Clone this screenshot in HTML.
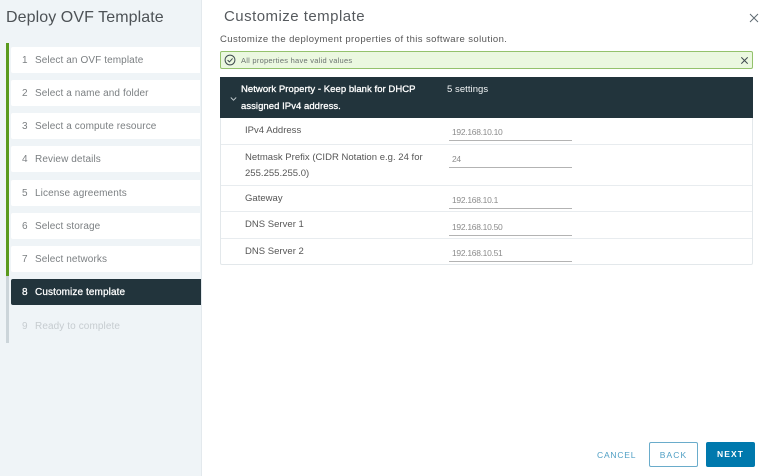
<!DOCTYPE html>
<html><head><meta charset="utf-8"><style>
html,body{margin:0;padding:0;width:768px;height:476px;overflow:hidden;background:#fff;font-family:"Liberation Sans",sans-serif}
div,span{position:absolute;white-space:nowrap;box-sizing:border-box}
.side{left:0;top:0;width:202px;height:476px;background:#eff4f7;border-right:1px solid #e3e9ed}
.item{left:11px;width:189px;height:26px;background:#fff;border-radius:2px 0 0 2px;font-size:10px;line-height:27px;color:#7b7f82;letter-spacing:.1px}
.item b{position:absolute;left:11px;font-weight:normal}
.item i{position:absolute;left:24px;font-style:normal}
.lab{left:245px;font-size:9.5px;line-height:15px;color:#565656;letter-spacing:.02px}
.val{left:449px;width:123px;height:16px;border-bottom:1px solid #b3b3b3;font-size:8.5px;line-height:14px;padding-left:3px;color:#8c8c8c;letter-spacing:-.3px}
.sep{left:221px;width:531px;height:1px;background:#e8ecef}
</style></head><body>
<div class="side"></div>
<div style="left:6px;top:8px;font-size:16px;line-height:20px;color:#4d5256;letter-spacing:.08px">Deploy OVF Template</div>
<div style="left:6px;top:43px;width:3px;height:233px;background:#5a9a1e"></div>
<div style="left:6px;top:276px;width:3px;height:67px;background:#ccd5da"></div>
<div class="item" style="top:47px"><b>1</b><i>Select an OVF template</i></div>
<div class="item" style="top:80px"><b>2</b><i>Select a name and folder</i></div>
<div class="item" style="top:113px"><b>3</b><i>Select a compute resource</i></div>
<div class="item" style="top:146px"><b>4</b><i>Review details</i></div>
<div class="item" style="top:180px"><b>5</b><i>License agreements</i></div>
<div class="item" style="top:213px"><b>6</b><i>Select storage</i></div>
<div class="item" style="top:246px"><b>7</b><i>Select networks</i></div>
<div class="item" style="top:279px;width:190px;background:#22343c;color:#fff"><b style="-webkit-text-stroke:.25px #fff">8</b><i style="-webkit-text-stroke:.25px #fff">Customize template</i></div>
<div class="item" style="top:313px;background:transparent;color:#c6ccd0"><b>9</b><i>Ready to complete</i></div>

<div style="left:224px;top:7px;font-size:15px;line-height:20px;color:#565a5e;letter-spacing:.47px">Customize template</div>
<svg style="position:absolute;left:749px;top:13px" width="10" height="10" viewBox="0 0 10 10"><path d="M1 1L9 9M9 1L1 9" stroke="#5f6b72" stroke-width="1" fill="none"/></svg>
<div style="left:220px;top:33px;font-size:9.5px;line-height:14px;color:#565656;letter-spacing:.41px">Customize the deployment properties of this software solution.</div>

<div style="left:220px;top:51px;width:533px;height:18px;background:#ebf8e0;border:1px solid #94c26c;border-radius:2px"></div>
<svg style="position:absolute;left:224px;top:54px" width="12" height="12" viewBox="0 0 12 12"><circle cx="6" cy="6" r="4.9" fill="none" stroke="#3f4a4f" stroke-width="1"/><path d="M3.6 6.1L5.4 7.9L8.6 4.4" fill="none" stroke="#3f4a4f" stroke-width="1"/></svg>
<div style="left:241px;top:55px;font-size:7.5px;line-height:12px;color:#6a736f;letter-spacing:.25px">All properties have valid values</div>
<svg style="position:absolute;left:741px;top:57px" width="7" height="7" viewBox="0 0 7 7"><path d="M.3 .3L6.7 6.7M6.7 .3L.3 6.7" stroke="#3f4a4f" stroke-width="1" fill="none"/></svg>

<div style="left:220px;top:77px;width:533px;height:188px;border:1px solid #e3e8eb;border-radius:0 0 2px 2px"></div>
<div style="left:220px;top:77px;width:533px;height:41px;background:#22343c"></div>
<svg style="position:absolute;left:230px;top:96px" width="7" height="6" viewBox="0 0 7 6"><path d="M.8 1.5L3.5 4.2L6.2 1.5" fill="none" stroke="#c5ced2" stroke-width=".9"/></svg>
<div style="left:241px;top:81px;font-size:9.5px;line-height:17px;color:#fff;letter-spacing:.05px;-webkit-text-stroke:.3px #fff;white-space:normal;width:200px">Network Property - Keep blank for DHCP<br>assigned IPv4 address.</div>
<div style="left:447px;top:81px;font-size:9.5px;line-height:17px;color:#f2f5f6;letter-spacing:.05px">5 settings</div>

<div class="lab" style="top:123px">IPv4 Address</div>
<div class="val" style="top:125px">192.168.10.10</div>
<div class="sep" style="top:144px"></div>
<div class="lab" style="top:150px;line-height:16px">Netmask Prefix (CIDR Notation e.g. 24 for<br>255.255.255.0)</div>
<div class="val" style="top:152px">24</div>
<div class="sep" style="top:185px"></div>
<div class="lab" style="top:191px">Gateway</div>
<div class="val" style="top:193px">192.168.10.1</div>
<div class="sep" style="top:211px"></div>
<div class="lab" style="top:217px">DNS Server 1</div>
<div class="val" style="top:220px">192.168.10.50</div>
<div class="sep" style="top:238px"></div>
<div class="lab" style="top:244px">DNS Server 2</div>
<div class="val" style="top:246px">192.168.10.51</div>

<div style="left:597px;top:449px;font-size:8.5px;line-height:13px;color:#4f9fc4;letter-spacing:.8px">CANCEL</div>
<div style="left:649px;top:442px;width:49px;height:25px;border:1px solid #6aaccb;border-radius:2px;text-align:center;font-size:8.5px;line-height:24px;color:#4f9fc4;letter-spacing:1.1px">BACK</div>
<div style="left:706px;top:442px;width:49px;height:25px;background:#0079ad;border-radius:2px;text-align:center;font-size:8.5px;line-height:25px;color:#fff;letter-spacing:1.1px;font-weight:bold">NEXT</div>
</body></html>
